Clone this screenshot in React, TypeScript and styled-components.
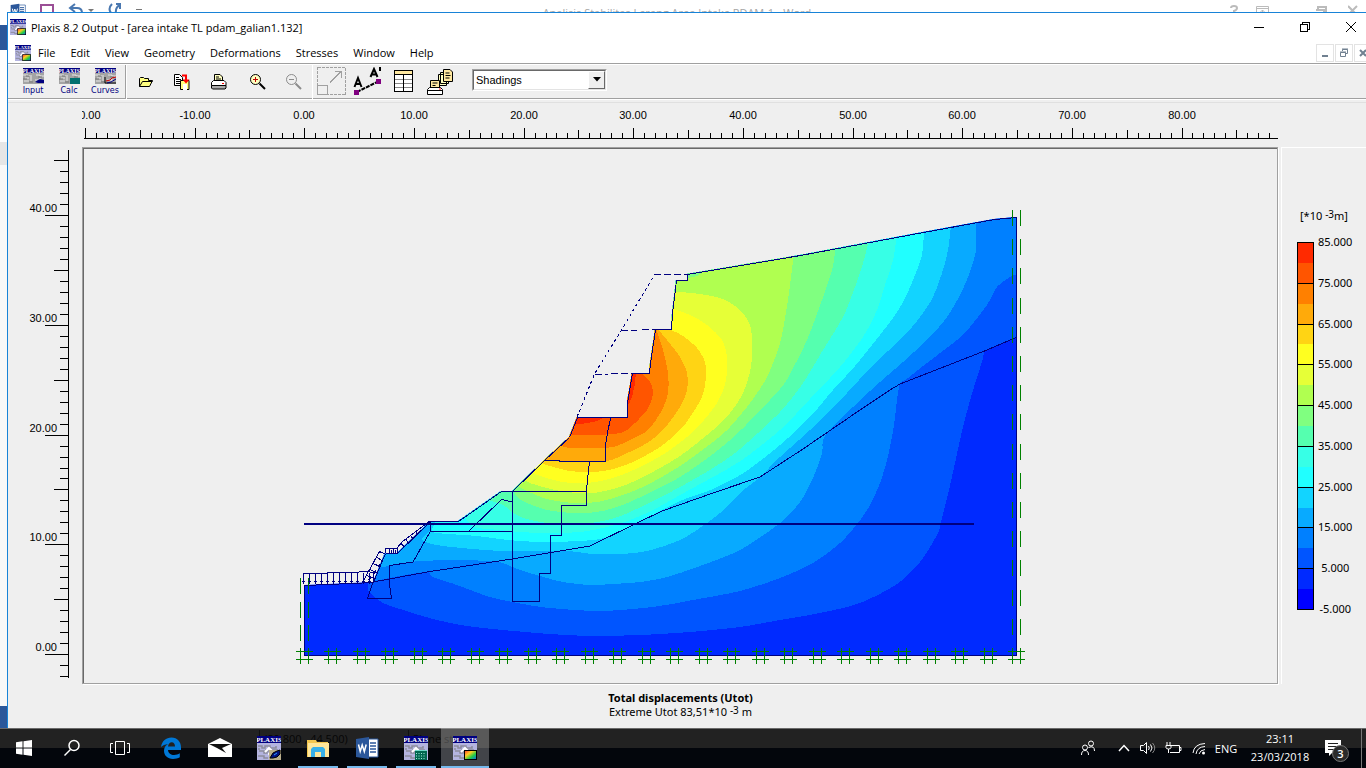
import React from "react";
import styled, { createGlobalStyle } from "styled-components";

const NAVY = "#000080";
const FACE = "#efefef";

const GlobalStyle = createGlobalStyle`
  * { box-sizing: border-box; }
  body { margin: 0; background: #fff; font-family: "Open Sans", "Noto Sans", sans-serif; font-size: 11px; color: #000; }
  button { font: inherit; color: inherit; background: none; border: 0; padding: 0; margin: 0; }
  svg { display: block; flex: none; }
`;

/* ---------- shell ---------- */
const Desktop = styled.div`
  display: flex;
  flex-direction: column;
  min-height: 100vh;
  overflow: hidden;
`;
const WordHeader = styled.header`
  position: relative;
  display: flex;
  gap: 14px;
  height: 12px;
  padding: 3px 8px 0 10px;
  overflow: hidden;
  background: #fff;
`;
const WordTitle = styled.div`
  flex: 1;
  margin-top: -3px;
  text-align: center;
  line-height: 25px;
  color: #a6a6a6;
  padding-right: 18px;
`;
const WordControls = styled.div`
  display: flex;
  gap: 18px;
`;
const Middle = styled.div`
  flex: 1;
  display: flex;
`;
const WordEdge = styled.div`
  width: 7px;
  display: flex;
  flex-direction: column;
`;
const EdgePart = styled.div<{ $h?: number; $color: string }>`
  ${(p) => (p.$h ? `height: ${p.$h}px;` : "flex: 1;")}
  background: ${(p) => p.$color};
`;
const Window = styled.main`
  flex: 1;
  min-width: 0;
  display: flex;
  flex-direction: column;
  border-top: 1px solid #1883d7;
  border-left: 1px solid #1883d7;
  background: ${FACE};
`;
const TitleBar = styled.div`
  display: flex;
  align-items: center;
  height: 28px;
  padding-left: 2px;
  background: #fff;
  overflow: hidden;
`;
const WindowTitle = styled.h1`
  flex: 1;
  margin: 0 0 0 5px;
  font-size: 11px;
  font-weight: 400;
`;
const Controls = styled.div`
  display: flex;
  margin-right: -8px;
`;
const ControlButton = styled.button`
  width: 46px;
  height: 28px;
  display: grid;
  place-items: center;
`;
const MenuBar = styled.nav`
  display: flex;
  align-items: center;
  gap: 15px;
  height: 23px;
  padding: 2px 0 0 7px;
  background: #fff;
  overflow: hidden;
  border-bottom: 1px solid #a0a0a0;
`;
const MenuItem = styled.button`
  line-height: 20px;
`;
const MenuIcon = styled.div`
  margin-right: -8px;
`;
const MdiControls = styled.div`
  display: flex;
  gap: 1px;
  margin: 0 -6px 0 auto;
`;
const MdiButton = styled.button`
  width: 18px;
  height: 18px;
  border: 1px solid #e3e3e3;
  display: grid;
  place-items: center;
`;

/* ---------- toolbar ---------- */
const Toolbar = styled.div`
  display: flex;
  height: 35px;
  align-items: center;
  border-top: 1px solid #fff;
  border-bottom: 1px solid #a0a0a0;
  box-shadow: 0 1px 0 #fff;
`;
const ProgramGroup = styled.div`
  display: flex;
  height: 34px;
  padding-left: 7px;
  width: 118px;
  border-right: 1px solid #a0a0a0;
`;
const ProgramButton = styled.button`
  width: 36px;
  display: flex;
  flex-direction: column;
  align-items: center;
  justify-content: center;
  gap: 2px;
  font: 8px/10px "DejaVu Sans", sans-serif;
  color: ${NAVY};
`;
const ToolGroup = styled.div`
  display: flex;
  align-items: center;
  height: 34px;
  padding-left: 1px;
  border-left: 1px solid #fff;
`;
const ToolButton = styled.button<{ $gap?: boolean }>`
  width: 36px;
  height: 32px;
  margin-left: ${(p) => (p.$gap ? 4 : 0)}px;
  display: grid;
  place-items: center;
`;
const ComboWrap = styled.label`
  position: relative;
  display: block;
  width: 135px;
  height: 22px;
  margin: 0 0 4px 14px;
  border: 1px solid;
  border-color: #a0a0a0 #fff #fff #a0a0a0;
`;
const Combo = styled.select`
  appearance: none;
  width: 100%;
  height: 20px;
  padding: 0 20px 0 2px;
  border: 1px solid;
  border-color: #696969 #e3e3e3 #e3e3e3 #696969;
  border-radius: 0;
  background: #fff;
  color: #000;
  font: 11px "Liberation Sans", sans-serif;
`;
const ComboArrow = styled.span`
  position: absolute;
  right: 1px;
  top: 1px;
  width: 17px;
  height: 18px;
  display: grid;
  place-items: center;
  pointer-events: none;
  background: ${FACE};
  border: 1px solid;
  border-color: #fff #696969 #696969 #fff;
`;

/* ---------- document ---------- */
const Workspace = styled.section`
  flex: 1;
  display: grid;
  grid-template-columns: 74px minmax(0, 1fr) 87px;
  grid-template-rows: 44px minmax(537px, 1fr) 44px;
  margin-top: 3px;
  border-top: 1px solid #e0e0e0;
`;
const TopRuler = styled.div`
  grid-column: 2 / 4;
  grid-row: 1;
`;
const SideRuler = styled.div`
  grid-column: 1;
  grid-row: 2;
`;
const Canvas = styled.div`
  grid-column: 2;
  grid-row: 2;
  margin-right: 1px;
  overflow: hidden;
  border: 1px solid #a0a0a0;
  box-shadow: inset 1px 1px 0 #696969, 1px 1px 0 #fff;
`;
const Legend = styled.aside`
  grid-column: 3;
  grid-row: 2;
  margin-left: 2px;
  padding: 60px 0 0 15px;
  border-left: 1px solid #fff;
  border-top: 1px solid #fff;
  font: 11px/16px "Noto Sans", sans-serif;
`;
const LegendUnit = styled.div`
  padding-left: 3px;
  margin-bottom: 10px;
  height: 16px;
  white-space: nowrap;
`;
const Sup = styled.sup`
  font-size: 10px;
  line-height: 0;
  vertical-align: 2px;
`;
const LegendBody = styled.div`
  display: flex;
  gap: 4px;
`;
const LegendBar = styled.div`
  width: 17px;
  height: 368px;
  margin-top: 8px;
  display: flex;
  flex-direction: column;
  border: 1px solid #000;
`;
const Swatch = styled.div<{ $color: string; $line: boolean }>`
  flex: 1;
  background: ${(p) => p.$color};
  border-top: ${(p) => (p.$line ? "1px solid #000" : "0")};
`;
const LegendLabels = styled.div`
  display: flex;
  flex-direction: column;
  justify-content: space-between;
  height: 383px;
  text-align: center;
`;
const Caption = styled.footer`
  grid-column: 2;
  grid-row: 3;
  padding-top: 7px;
  text-align: center;
  font: 11px/14px "Noto Sans", sans-serif;
`;

/* ---------- taskbar ---------- */
const Taskbar = styled.footer`
  position: relative;
  display: flex;
  height: 40px;
  background: linear-gradient(#6a6a6a 0 1px, #222 1px 20px, #03060c 20px);
  color: #fff;
`;
const GhostStatus = styled.div`
  position: absolute;
  left: 259px;
  top: 2px;
  display: flex;
  gap: 60px;
  height: 18px;
  line-height: 18px;
  color: #060606;
  white-space: nowrap;
`;
const GhostCell = styled.span`
  padding-left: 4px;
  border-left: 1px solid #111;
`;
const TaskButtons = styled.div`
  position: relative;
  display: flex;
  gap: 1px;
`;
const SystemButtons = styled.div`
  display: flex;
  margin-right: 2px;
`;
const TaskButton = styled.button<{ $active?: boolean; $open?: boolean }>`
  position: relative;
  width: 48px;
  height: 40px;
  display: grid;
  place-items: center;
  background: ${(p) => (p.$active ? "#ffffff40" : "transparent")};
  &::after {
    content: "";
    display: ${(p) => (p.$open ? "block" : "none")};
    position: absolute;
    bottom: 0;
    left: ${(p) => (p.$active ? 0 : 4)}px;
    right: ${(p) => (p.$active ? 0 : 4)}px;
    height: 2px;
    background: #76b9ed;
  }
`;
const Tray = styled.div`
  position: relative;
  display: flex;
  align-items: center;
  margin-left: auto;
  padding-right: 4px;
`;
const TrayIcon = styled.button<{ $w?: number }>`
  width: ${(p) => p.$w ?? 26}px;
  height: 40px;
  display: grid;
  place-items: center;
`;
const Clock = styled.time`
  width: 72px;
  text-align: center;
  line-height: 18px;
`;
const NoticeButton = styled.button`
  position: relative;
  width: 46px;
  height: 40px;
  padding-left: 9px;
  display: flex;
  align-items: center;
  border-right: 1px solid #777;
`;
const NoticeBadge = styled.span`
  position: absolute;
  left: 16px;
  top: 17px;
  width: 17px;
  height: 17px;
  border-radius: 50%;
  border: 1px solid #777;
  background: #2b2b2b;
  font-weight: 600;
  line-height: 15px;
  text-align: center;
`;

/* ---------- finite element plot ---------- */
type Pt = [number, number];

const DOMAIN =
  "304,655 304,585 373,582 384,555 386,553 397,553 430,521 458,521 501,491 512,491 544,460 569,437 577,417 627,417 627,402 632,373 649,373 650,363 655,329 671,329 672,313 676,280 687,280 687,274 800,255 923,232 994,219 1016,217 1016,655";

const BANDS: { color: string; pts: Pt[] }[] = [
  { color: "#0055ff", pts: [[1030, 331], [1017, 337], [987, 350], [982, 362], [971, 397], [963, 427], [955, 463], [949, 490], [941, 522], [937, 535], [920, 562], [897, 584], [860, 603], [820, 613], [780, 620], [740, 627], [690, 632], [640, 635], [590, 636], [550, 634], [503, 630], [467, 626], [433, 619], [400, 609], [383, 603], [370, 593], [368, 588], [369, 580]] },
  { color: "#0080ff", pts: [[1030, 274], [1016, 275], [1010, 277], [997, 287], [987, 305], [970, 327], [957, 340], [927, 363], [908, 378], [900, 384], [897, 400], [895, 417], [892, 437], [887, 460], [880, 483], [870, 505], [858, 523], [840, 543], [813, 563], [780, 578], [740, 591], [693, 600], [653, 607], [600, 611], [550, 608], [523, 604], [490, 597], [457, 585], [433, 577], [427, 572], [400, 576], [374, 581]] },
  { color: "#08aaff", pts: [[976, 222], [976, 250], [970, 272], [960, 295], [947, 317], [930, 337], [903, 362], [880, 382], [853, 407], [825, 436], [822, 453], [813, 478], [800, 502], [780, 523], [740, 550], [700, 566], [667, 577], [640, 582], [613, 584], [590, 585], [563, 582], [540, 576], [520, 570], [500, 562], [490, 561], [457, 560], [420, 561], [413, 562], [389, 566], [376, 568]] },
  { color: "#12d4ff", pts: [[951, 226], [948, 250], [943, 270], [933, 297], [920, 317], [903, 337], [873, 365], [847, 393], [810, 430], [780, 457], [760, 477], [740, 493], [727, 507], [707, 523], [680, 540], [647, 551], [620, 554], [593, 554], [568, 551], [540, 551], [503, 551], [473, 549], [443, 546], [428, 543], [422, 539], [430, 530], [427, 519]] },
  { color: "#20ffff", pts: [[924, 230], [922, 255], [913, 280], [903, 302], [890, 322], [855, 366], [833, 390], [810, 417], [780, 445], [745, 472], [713, 489], [680, 501], [647, 518], [627, 529], [613, 535], [600, 539], [580, 541], [547, 542], [520, 541], [500, 539], [477, 536], [437, 533], [432, 530], [434, 525], [437, 518]] },
  { color: "#37ffe6", pts: [[897, 234], [893, 260], [885, 285], [877, 310], [863, 337], [840, 367], [810, 399], [780, 430], [742, 460], [713, 477], [680, 495], [653, 510], [630, 520], [607, 527], [580, 532], [547, 533], [520, 532], [500, 530], [474, 527], [464, 516]] },
  { color: "#55ffaf", pts: [[869, 240], [863, 263], [855, 287], [843, 317], [823, 350], [803, 383], [780, 412], [740, 449], [713, 468], [680, 487], [647, 504], [623, 515], [603, 521], [580, 524], [547, 523], [523, 518], [512, 512], [503, 505], [488, 500]] },
  { color: "#80ff80", pts: [[836, 246], [832, 270], [822, 300], [807, 340], [792, 370], [780, 389], [740, 431], [713, 454], [680, 477], [647, 494], [620, 506], [597, 512], [573, 513], [547, 510], [527, 503], [517, 497], [513, 490]] },
  { color: "#b0ff50", pts: [[794, 252], [788, 300], [780, 343], [767, 377], [750, 403], [730, 427], [713, 442], [680, 466], [647, 485], [620, 496], [597, 502], [573, 503], [547, 499], [527, 491], [518, 486]] },
  { color: "#e6ff37", pts: [[668, 291], [700, 294], [723, 299], [740, 310], [750, 325], [752, 343], [751, 367], [743, 393], [730, 413], [713, 430], [680, 456], [647, 475], [620, 487], [593, 493], [567, 492], [547, 488], [530, 483], [520, 478]] },
  { color: "#ffff20", pts: [[668, 307], [690, 315], [707, 325], [722, 340], [727, 357], [726, 380], [717, 403], [695, 430], [667, 452], [640, 467], [613, 478], [587, 483], [563, 482], [543, 477], [528, 471]] },
  { color: "#ffd414", pts: [[655, 325], [671, 330], [683, 336], [697, 348], [705, 362], [706, 377], [702, 397], [690, 417], [680, 430], [660, 447], [633, 462], [613, 469], [593, 472], [570, 471], [550, 466], [536, 461]] },
  { color: "#ffaa0a", pts: [[655, 326], [667, 340], [680, 357], [687, 373], [687, 390], [680, 407], [663, 430], [647, 443], [623, 455], [607, 461], [580, 462], [560, 461], [542, 459]] },
  { color: "#ff8000", pts: [[655, 326], [663, 350], [668, 373], [668, 393], [662, 410], [648, 430], [630, 440], [613, 447], [593, 448], [570, 448], [556, 444]] },
  { color: "#ff5500", pts: [[632, 371], [642, 374], [650, 382], [653, 393], [647, 410], [627, 430], [613, 434], [590, 435], [565, 435]] },
];

const smooth = (pts: Pt[]) => {
  let d = `M${pts[0][0]} ${pts[0][1]}`;
  for (let i = 0; i < pts.length - 1; i++) {
    const a = pts[Math.max(0, i - 1)];
    const b = pts[i];
    const c = pts[i + 1];
    const e = pts[Math.min(pts.length - 1, i + 2)];
    const k = 7;
    d += `C${b[0] + (c[0] - a[0]) / k} ${b[1] + (c[1] - a[1]) / k} ${c[0] - (e[0] - b[0]) / k} ${c[1] - (e[1] - b[1]) / k} ${c[0]} ${c[1]}`;
  }
  return d;
};
const bandPath = (pts: Pt[]) =>
  `${smooth(pts)}L290 ${pts[pts.length - 1][1]}L290 190L${pts[0][0]} 190Z`;

const range = (n: number) => Array.from({ length: n }, (_, i) => i);

const Fixities = () => (
  <g stroke="#008000" fill="none">
    {[1012.5, 1020.5].map((x) => (
      <path key={x} d={range(15).map((i) => `M${x} ${Math.round(210 + i * 29.2)}v16`).join("")} />
    ))}
    {[300.5, 308.5].map((x) => (
      <path key={x} d={[578, 602, 625].map((y) => `M${x} ${y}v16`).join("")} />
    ))}
    {range(26).map((i) => {
      const x = Math.round(296 + i * 28.48);
      return <path key={i} d={`M${x} 651.5h17M${x} 659.5h17M${x + 4}.5 648v16M${x + 12}.5 648v16`} />;
    })}
  </g>
);

const Loads = () => (
  <g stroke={NAVY} fill="none">
    <path d="M303.5 584V573.5H327L328 572.5H352L367 571.5L373.500 572.5V582" />
    {range(12).map((i) => (
      <path key={i} d={`M${303 + i * 6}.5 573v11M${302 + i * 6} 581.5h3`} />
    ))}
    <path d="M363.500 580.500L379.500 551.500L385 554M366 575l9 4M369 569l8 4M372 563l9 4M376 557l7 4M372 577l-4 3M376 570l-2 4M380 564l-2 3" />
    <path d="M385.500 553V548.500H397V553M389.500 548v5M393.500 548v5M391.500 550v3M395.500 550v3" />
    <path d="M397 548L402 542L430 521M401 543l3 4M406 539l2 4M411 536l2 3M416 532l1 3" />
  </g>
);

const SlopeModel = () => (
  <svg width="100%" height="535" role="img" aria-label="Total displacements" shapeRendering="crispEdges">
    <defs>
      <clipPath id="soil">
        <polygon points={DOMAIN} />
      </clipPath>
    </defs>
    <g transform="translate(-83 -148)">
      <g clipPath="url(#soil)">
        <rect x="290" y="190" width="740" height="470" fill="#002aff" />
        {BANDS.map((b) => (
          <path key={b.color} d={bandPath(b.pts)} fill={b.color} />
        ))}
        <path d="M686 273H702L697 276L687 278Z" fill="#80ff80" />
        <path d="M626 370H636L635 384L632 397L629 404L626 406Z" fill="#ff2a00" />
        <path d="M570 416H608L603 418L597 421L588 423L572 425Z" fill="#ff2a00" />
      </g>
      <polygon points={DOMAIN} transform="translate(.5 .5)" fill="none" stroke={NAVY} />
      <g stroke={NAVY} fill="none">
        <path d="M373 582L427 572L512 559L590 546L637 523L662 511L713 493L760 477L780 464L803 449L860 410L890 390L900 384L987 350L1017 337" />
        <path d="M430.500 521V531.500H512" />
        <path d="M430 532L413 562L389.500 565.500V585L391.500 598.500H367.500L373 582" />
        <path d="M469 531L501.500 499.500L512 502" />
        <path d="M512.500 491V601.500H539.500V573.500H550.500V535.500H561.500V505.500H586.500V490L589.500 461" />
        <path d="M512 491.500H586" />
        <path d="M544 460.500H559V461.500H605.500V445L608 430L611 417" />
        <path d="M577 417L594.500 374L621.500 330L654.500 274.500" strokeDasharray="3 3" />
        <path d="M654 274.500H687M621 330.500H637M642 329.500H655M595 374.500H608M611 373.500H632" strokeDasharray="7 3" />
        <path d="M304 524H974" strokeWidth="2" />
      </g>
      <Fixities />
      <Loads />
    </g>
  </svg>
);

/* ---------- rulers ---------- */
const RULER_FONT = { fontFamily: '"Liberation Sans", sans-serif', fontSize: 11 };

const HorizontalRuler = () => (
  <svg width="100%" height="44" aria-label="Horizontal ruler">
    <path
      shapeRendering="crispEdges"
      stroke="#000"
      d={"M2 35.500H1196" + range(109).map((i) => {
        const h = i % 10 === 0 ? 10 : i % 5 === 0 ? 8 : 5;
        return `M${Math.round(3 + i * 10.965)}.5 ${35 - h}v${h}`;
      }).join("")}
    />
    {range(11).map((i) => (
      <text key={i} x={Math.round(3 + i * 109.65)} y="16" textAnchor="middle" {...RULER_FONT}>
        {((i - 2) * 10).toFixed(2)}
      </text>
    ))}
  </svg>
);

const VerticalRuler = () => (
  <svg width="74" height="537" aria-label="Vertical ruler">
    <path
      shapeRendering="crispEdges"
      stroke="#000"
      d={"M60.500 3V531" + range(48).map((i) => {
        const v = i - 2;
        const w = v % 10 === 0 ? 23 : v % 5 === 0 ? 14 : 8;
        return `M${60 - w} ${Math.round(507 - v * 10.97)}.5h${w}`;
      }).join("")}
    />
    {range(5).map((i) => (
      <text key={i} x="49" y={Math.round(504 - i * 109.7)} textAnchor="end" {...RULER_FONT}>
        {(i * 10).toFixed(2)}
      </text>
    ))}
  </svg>
);

/* ---------- icons ---------- */
const PlaxisIcon = ({ kind, size = 24 }: { kind: "input" | "calc" | "curves" | "output"; size?: number }) => (
  <svg width={size} height={size} viewBox="0 0 24 24" aria-hidden="true">
    <rect width="24" height="24" fill="#b4b4e0" />
    <path d="M1 10h4v2h3v-2h5v2h6v-2M2 15h5v2h4M1 20h6v2h4M15 14h6M2 12v2M9 13v2h5" stroke="#8c8c9c" strokeWidth="1.500" fill="none" />
    <path d="M8 16l4-4 3 3-3 3 2 3" stroke="#fff" strokeWidth="2" fill="none" />
    <rect width="24" height="7" fill="#000080" />
    <text x="12" y="6" textAnchor="middle" fontSize="7" fontWeight="700" fontFamily='"Liberation Serif", serif' fill="#fff">
      PLAXIS
    </text>
    {kind === "output" && (
      <>
        <defs>
          <linearGradient id="heat" x1="0" y1="0" x2="1" y2="1">
            <stop offset="0" stopColor="#f33" />
            <stop offset=".35" stopColor="#fc2" />
            <stop offset=".65" stopColor="#2c4" />
            <stop offset="1" stopColor="#06f" />
          </linearGradient>
        </defs>
        <rect x="11.500" y="14.500" width="12" height="9" fill="url(#heat)" stroke="#000" />
      </>
    )}
    {kind === "input" && (
      <>
        <rect x="12" y="14" width="12" height="10" fill="#b9ad8c" />
        <path d="M13 22l3-5 4-2 3-1v4l-3 3-4 1z" fill="#001080" stroke="#000" />
        <path d="M17 19l3-2" stroke="#39f" />
      </>
    )}
    {kind === "calc" && (
      <>
        <rect x="11" y="14" width="12" height="10" fill="#006850" />
        <path d="M11 14.500h12" stroke="#6fd8c8" />
        <path d="M12 17.500h10M12 20h10M12 22.500h10" stroke="#9fe8d8" strokeDasharray="1 1.500" />
      </>
    )}
  </svg>
);

const ProgramIcon = ({ kind }: { kind: string }) => (
  <svg width="21" height="16" viewBox="0 0 21 16" aria-hidden="true">
    <rect width="21" height="16" fill="#a4a4a4" />
    <path d="M0 7h5v1h4M2 10h4M13 7h4v1h4M1 13h5M12 12h5M8 9v4M17 10v4" stroke="#e6e6e6" fill="none" />
    <path d="M3 8h3v1M0 11h4M6 14h4M15 9h4" stroke="#777" fill="none" />
    <rect width="21" height="5" fill="#000080" />
    <text x="10" y="5" textAnchor="middle" fontSize="6" fontWeight="700" fontFamily='"Liberation Serif", serif' fill="#fff">
      PLAXIS
    </text>
    {kind === "Input" && <path d="M12 14l3-2 2-1 4 1v3h-6z" fill="#000080" />}
    {kind === "Calc" && <path d="M11 10h10v6H11z" fill="#007070" />}
    {kind === "Curves" && (
      <>
        <path d="M10 9v6h11" stroke="#000" fill="none" />
        <path d="M11 13l4-1 2-2 4-1" stroke="#c00" fill="none" />
        <path d="M12 15l4-1 5-3" stroke="#000080" fill="none" />
      </>
    )}
  </svg>
);

const OpenIcon = () => (
  <svg width="16" height="12" viewBox="0 0 16 12">
    <path d="M1.500 10.500V2.500L2.500 1.500H5.500L6.500 2.500H10.500V4.500H14.500L11.500 10.500Z" fill="#ffff80" stroke="#000" />
    <path d="M1.500 10.500L4.500 5.500H14.500" fill="none" stroke="#000" />
  </svg>
);
const CopyIcon = () => (
  <svg width="18" height="18" viewBox="0 0 18 18">
    <path d="M1.500 1.500H6.500L9.500 4.500V12.500H1.500Z" fill="#fff" stroke="#000" />
    <path d="M3 4.500h3M3 6.500h5M3 8.500h5M3 10.500h5" stroke="#000" />
    <path d="M7.500 7.500h8.500v9H7.500z" fill="#ffff80" stroke="#000" />
    <path d="M10 11h4v6h-4z" fill="#fff" />
    <path d="M9 1.500h5v5h2.500L13 10.500 9.500 6.500H12V3.500H9z" fill="#f00" />
  </svg>
);
const PrinterIcon = () => (
  <svg width="17" height="17" viewBox="0 0 17 17">
    <path d="M4.500 8V1.500H10L12.500 4V8" fill="#ffffc0" stroke="#000" />
    <path d="M6 4h3M6 6h5" stroke="#000" />
    <path d="M1.500 9.500L3.500 7.500H14L16 9.500V12.500H1.500Z" fill="#fff" stroke="#000" />
    <path d="M1.500 12.500H16V15L15 16H2.500L1.500 15Z" fill="#aaa" stroke="#000" />
    <path d="M12 10.500h2" stroke="#f00" />
  </svg>
);
const LensIcon = ({ plus }: { plus?: boolean }) => {
  const ink = plus ? "#000" : "#8c8c8c";
  return (
    <svg width="18" height="18" viewBox="0 0 18 18" fill="none">
      <circle cx="6.500" cy="6.500" r="5" stroke={ink} fill={plus ? "#ffffc0" : "none"} />
      <path d="M10.500 10.500L16 16" stroke={ink} strokeWidth="2" />
      <path d={plus ? "M4 6.500h5M6.500 4v5" : "M4 6.500h5"} stroke={plus ? "#c00000" : ink} />
    </svg>
  );
};
const FitIcon = () => (
  <svg width="30" height="29" viewBox="0 0 30 29" fill="none" shapeRendering="crispEdges">
    <rect x=".5" y=".5" width="28" height="27" stroke="#a0a0a0" strokeDasharray="3 1" />
    <rect x=".5" y="18.500" width="10" height="9" fill={FACE} stroke="#a0a0a0" />
    <path d="M13 15.500L24 4.500M18 4.500h6v6" stroke="#a0a0a0" />
  </svg>
);
const SectionIcon = () => (
  <svg width="30" height="29" viewBox="0 0 30 29" fill="none">
    <path d="M1.500 20L5 11L8.500 20M3 17h4.500" stroke="#000" strokeWidth="2" />
    <path d="M17.500 10L21 2L24.500 10M19 7.500h4.500M27 0v4" stroke="#000" strokeWidth="2" />
    <path d="M4 25L26 14" stroke="#000" strokeWidth="2" strokeDasharray="4 1" />
    <path d="M1 23h5v5H1zM23 12h5v5h-5z" fill="#800080" />
  </svg>
);
const TableIcon = () => (
  <svg width="20" height="23" viewBox="0 0 20 23" shapeRendering="crispEdges">
    <rect x="1" y="1" width="18" height="21" fill="#fff" />
    <rect x="1" y="1" width="18" height="4" fill="#ffe8a0" />
    <path d="M1 9.500h18M1 13.500h18M1 17.500h18" stroke="#888" />
    <path d="M.5 .5h18v21H.500zM0 4.500h19M9.500 4v18" fill="none" stroke="#000" />
  </svg>
);
const ReportIcon = () => (
  <svg width="28" height="28" viewBox="0 0 28 28" stroke="#000">
    <path d="M12.500 6.500h8v11h-8zM14.500 4.500h8v11h-8z" fill="#ffffc0" />
    <path d="M17.500 1.500H24L26.500 4V13.500H17.500Z" fill="#ffe8a0" />
    <path d="M19.500 5h4M19.500 7.500h5M19.500 10h4" />
    <path d="M4.500 19V12.500H13.500V19" fill="#ffe8a0" />
    <path d="M6.500 15h5M6.500 17.500h3" />
    <path d="M1.500 21.500L3.500 19.500H14.500L16.500 21.500V26.500H1.500Z" fill="#fff" />
    <path d="M1.500 22.500H16" />
    <path d="M13 21h2" stroke="#f00" />
  </svg>
);

const MinimizeGlyph = () => <svg width="12" height="12" stroke="#000"><path d="M1 6.500h10" shapeRendering="crispEdges" /></svg>;
const RestoreGlyph = () => (
  <svg width="12" height="12" stroke="#000" fill="none" shapeRendering="crispEdges">
    <path d="M1.500 3.500h7v7h-7zM3.500 3V1.500h7v7H9" />
  </svg>
);
const CloseGlyph = () => <svg width="12" height="12" stroke="#000"><path d="M1 1l10 10M11 1L1 11" /></svg>;

const WindowsLogo = () => (
  <svg width="16" height="16" viewBox="0 0 16 16" fill="#fff">
    <path d="M0 2.200L6.500 1.300V7.500H0ZM7.500 1.200L16 0V7.500H7.500ZM0 8.500H6.500V14.700L0 13.800ZM7.500 8.500H16V16L7.500 14.800Z" />
  </svg>
);
const SearchGlyph = () => (
  <svg width="18" height="18" fill="none" stroke="#fff" strokeWidth="1.500">
    <circle cx="11" cy="6.500" r="5" />
    <path d="M7.500 10.500L1.500 16.500" />
  </svg>
);
const TaskViewGlyph = () => (
  <svg width="20" height="14" fill="none" stroke="#fff">
    <path d="M5.500 .5h9v13h-9zM3 2.500H.500v9H3M17 2.500h2.500v9H17" />
  </svg>
);
const EdgeLogo = () => (
  <svg width="22" height="22" viewBox="0 0 22 22" fill="#0078d7">
    <path d="M1 10C2 4 6 .5 11.500 .5C17.500 .5 21 5 21 10.500V13H8C8.300 16.300 11 18 14 18C16.300 18 18.200 17.300 19.800 16.300V20.300C18 21.300 15.500 22 13 22C7.500 22 4 18.500 4 13.800C4 10.800 5.500 8.300 8 7C5.200 7.300 2.500 8.500 1 10ZM8 9.500H15C15 7 13.800 5.300 11.700 5.300C9.800 5.300 8.300 7 8 9.500Z" />
  </svg>
);
const MailLogo = () => (
  <svg width="24" height="20" viewBox="0 0 24 20">
    <path d="M0 6L12 0L24 6V19H0Z" fill="#fff" />
    <path d="M1 6H23L14 10L18 15L9 10Z" fill="#111" />
  </svg>
);
const FolderLogo = () => (
  <svg width="22" height="19" viewBox="0 0 22 19">
    <path d="M0 1H9L10 3H21V18H0Z" fill="#f3c64f" />
    <path d="M1 4H22V18H1Z" fill="#ffe69a" />
    <path d="M4 18V10L6 8H16L18 10V18H14V13H8V18Z" fill="#38b0e8" />
  </svg>
);
const WordLogo = ({ width = 24 }: { width?: number }) => (
  <svg width={width} height={width} viewBox="0 0 24 24">
    <path d="M13 3H23V21H13Z" fill="#fff" stroke="#2b579a" />
    <path d="M15 7h6M15 10h6M15 13h6M15 16h6" stroke="#2b579a" strokeWidth="1.500" />
    <path d="M1 3L14 1V23L1 21Z" fill="#2b579a" />
    <path d="M3.500 8.500L5.200 15.500L7.200 9L9.300 15.500L11.200 8.500" fill="none" stroke="#fff" strokeWidth="1.500" />
  </svg>
);

const LEGEND_COLORS = ["#ff2a00", "#ff5500", "#ff8000", "#ffaa0a", "#ffd414", "#ffff20", "#e6ff37", "#b0ff50", "#80ff80", "#55ffaf", "#37ffe6", "#20ffff", "#12d4ff", "#08aaff", "#0080ff", "#0055ff", "#002aff", "#0000ff"];
const LEGEND_LABELS = ["85.000", "75.000", "65.000", "55.000", "45.000", "35.000", "25.000", "15.000", "5.000", "-5.000"];
const MENUS = ["File", "Edit", "View", "Geometry", "Deformations", "Stresses", "Window", "Help"];

export default function App() {
  return (
    <Desktop>
      <GlobalStyle />
      <WordHeader>
        <WordLogo width={16} />
        <svg width="14" height="14" fill="none" stroke="#9b4f96" strokeWidth="2"><path d="M1 2h12v11H1z" /></svg>
        <svg width="26" height="14" fill="none" stroke="#4a78b0" strokeWidth="2">
          <path d="M7 1L2 5L7 9M2 5H9Q14 5 14 10" /><path d="M20 6h6l-3 3z" fill="#777" stroke="none" />
        </svg>
        <svg width="34" height="14" fill="none" stroke="#4a78b0" strokeWidth="2">
          <path d="M4 1Q-1 6 4 11M8 1h4v5M12 2Q7 4 8 11" /><path d="M28 6.500h6" stroke="#777" strokeWidth="1" />
        </svg>
        <WordTitle>Analisis Stabilitas Lereng Area Intake PDAM-1 - Word</WordTitle>
        <WordControls>
          <svg width="8" height="12" fill="none" stroke="#bbb" strokeWidth="2"><path d="M1 5Q1 3 4 3Q7 3 7 5Q7 7 4 8V10" /></svg>
          <svg width="14" height="12" fill="none" stroke="#bbb"><path d="M.5 3.500h12v9h-12zM.5 5.500h12M6.500 7v5M4 9.500l2.500-2.500 2.500 2.500" /></svg>
          <svg width="42" height="12" fill="none" stroke="#bbb" strokeWidth="2"><path d="M28 7h8v5h-8M30 7V4h8v5" /></svg>
          <svg width="10" height="12" fill="none" stroke="#bbb" strokeWidth="2"><path d="M0 3l9 9M9 3l-9 9" /></svg>
        </WordControls>
      </WordHeader>

      <Middle>
        <WordEdge>
          <EdgePart $h={13} $color="#fff" />
          <EdgePart $h={25} $color="#2b579a" />
          <EdgePart $h={92} $color="#fdfdfd" />
          <EdgePart $h={23} $color="#e6e6e6" />
          <EdgePart $color="#f8f8f8" />
          <EdgePart $h={22} $color="#2b579a" />
        </WordEdge>

        <Window>
          <TitleBar>
            <PlaxisIcon kind="output" size={16} />
            <WindowTitle>Plaxis 8.2 Output - [area intake TL pdam_galian1.132]</WindowTitle>
            <Controls>
              <ControlButton aria-label="Minimize"><MinimizeGlyph /></ControlButton>
              <ControlButton aria-label="Restore"><RestoreGlyph /></ControlButton>
              <ControlButton aria-label="Close"><CloseGlyph /></ControlButton>
            </Controls>
          </TitleBar>

          <MenuBar>
            <MenuIcon><PlaxisIcon kind="output" size={16} /></MenuIcon>
            {MENUS.map((m) => <MenuItem key={m}>{m}</MenuItem>)}
            <MdiControls>
              <MdiButton aria-label="Minimize document">
                <svg width="10" height="10" stroke="#708090" strokeWidth="2"><path d="M2 8h6" /></svg>
              </MdiButton>
              <MdiButton aria-label="Restore document">
                <svg width="10" height="10" fill="none" stroke="#708090"><path d="M1.500 4.500h5v4h-5zM1 4h6M3.500 3V1.500h5v4H7M3 1h6" /></svg>
              </MdiButton>
              <MdiButton aria-label="Close document">
                <svg width="10" height="10" stroke="#708090" strokeWidth="2"><path d="M2 2l6 6M8 2L2 8" /></svg>
              </MdiButton>
            </MdiControls>
          </MenuBar>

          <Toolbar>
            <ProgramGroup>
              {["Input", "Calc", "Curves"].map((p) => (
                <ProgramButton key={p}><ProgramIcon kind={p} />{p}</ProgramButton>
              ))}
            </ProgramGroup>
            <ToolGroup>
              <ToolButton aria-label="Open"><OpenIcon /></ToolButton>
              <ToolButton aria-label="Copy to clipboard"><CopyIcon /></ToolButton>
              <ToolButton aria-label="Print"><PrinterIcon /></ToolButton>
              <ToolButton aria-label="Zoom in" $gap><LensIcon plus /></ToolButton>
              <ToolButton aria-label="Zoom out"><LensIcon /></ToolButton>
            </ToolGroup>
            <ToolGroup>
              <ToolButton aria-label="Scale"><FitIcon /></ToolButton>
              <ToolButton aria-label="Cross section"><SectionIcon /></ToolButton>
              <ToolButton aria-label="Table"><TableIcon /></ToolButton>
              <ToolButton aria-label="Report"><ReportIcon /></ToolButton>
            </ToolGroup>
            <ComboWrap>
              <Combo aria-label="Display type" defaultValue="Shadings">
                <option>Shadings</option>
              </Combo>
              <ComboArrow>
                <svg width="8" height="5"><path d="M0 0h8L4 4.500z" /></svg>
              </ComboArrow>
            </ComboWrap>
          </Toolbar>

          <Workspace>
            <TopRuler><HorizontalRuler /></TopRuler>
            <SideRuler><VerticalRuler /></SideRuler>
            <Canvas><SlopeModel /></Canvas>
            <Legend>
              <LegendUnit>[*10 <Sup>-3</Sup>m]</LegendUnit>
              <LegendBody>
                <LegendBar>
                  {LEGEND_COLORS.map((c, i) => <Swatch key={c} $color={c} $line={i > 0 && i % 2 === 0} />)}
                </LegendBar>
                <LegendLabels>
                  {LEGEND_LABELS.map((l) => <span key={l}>{l}</span>)}
                </LegendLabels>
              </LegendBody>
            </Legend>
            <Caption>
              <strong>Total displacements (Utot)</strong>
              <div>Extreme Utot 83,51*10 <Sup>-3</Sup> m</div>
            </Caption>
          </Workspace>
        </Window>
      </Middle>

      <Taskbar>
        <GhostStatus>
          <GhostCell>(89.800 , 44.500)</GhostCell>
          <GhostCell>Plane strain</GhostCell>
        </GhostStatus>
        <TaskButtons>
          <SystemButtons>
            <TaskButton aria-label="Start"><WindowsLogo /></TaskButton>
            <TaskButton aria-label="Search"><SearchGlyph /></TaskButton>
            <TaskButton aria-label="Task view"><TaskViewGlyph /></TaskButton>
          </SystemButtons>
          <TaskButton aria-label="Edge"><EdgeLogo /></TaskButton>
          <TaskButton aria-label="Mail"><MailLogo /></TaskButton>
          <TaskButton aria-label="Plaxis input"><PlaxisIcon kind="input" /></TaskButton>
          <TaskButton aria-label="File Explorer" $open><FolderLogo /></TaskButton>
          <TaskButton aria-label="Word" $open><WordLogo /></TaskButton>
          <TaskButton aria-label="Plaxis calculations" $open><PlaxisIcon kind="calc" /></TaskButton>
          <TaskButton aria-label="Plaxis output" $open $active><PlaxisIcon kind="output" /></TaskButton>
        </TaskButtons>
        <Tray>
          <TrayIcon $w={40} aria-label="People">
            <svg width="16" height="16" fill="none" stroke="#fff">
              <circle cx="5" cy="7.500" r="2.500" /><path d="M1.500 15Q1.500 10.500 5 10.500Q8.500 10.500 8.500 15" />
              <circle cx="11" cy="3.500" r="2.500" /><path d="M8.500 7.500Q14.500 5 14.500 11" />
            </svg>
          </TrayIcon>
          <TrayIcon $w={32} aria-label="Hidden icons">
            <svg width="12" height="8" fill="none" stroke="#fff" strokeWidth="1.500"><path d="M1 7l5-5.500L11 7" /></svg>
          </TrayIcon>
          <TrayIcon $w={16} aria-label="Volume">
            <svg width="16" height="14" fill="none" stroke="#fff">
              <path d="M.5 4.500h3L6.500 1.500v11l-3-3h-3zM8.500 5q1.500 2 0 4M10.500 3.500q3 3.500 0 7" /><path d="M12.500 2q4.500 5 0 10" stroke="#888" />
            </svg>
          </TrayIcon>
          <TrayIcon $w={34} aria-label="Battery">
            <svg width="17" height="14" fill="none" stroke="#fff">
              <path d="M6 4.500h8.500v7H5M14.500 6.500h1.500v3h-1.500M2 1v3M5 1v3M1 4.500h5v2q0 1.500-2.500 1.500T1 6.500zM3.500 8v4" />
            </svg>
          </TrayIcon>
          <TrayIcon $w={18} aria-label="Wi-Fi">
            <svg width="14" height="14" fill="none" stroke="#fff">
              <path d="M1 12Q2 3 13 2.500M4 13Q5 6 13 5.500M7 13Q8 9 13 8.500" /><circle cx="11.500" cy="12" r="1.500" fill="#fff" stroke="none" />
            </svg>
          </TrayIcon>
          <TrayIcon $w={36} aria-label="Language">ENG</TrayIcon>
          <Clock>23:11<br />23/03/2018</Clock>
          <NoticeButton aria-label="Notifications">
            <svg width="16" height="16"><path d="M0 0h16v13H7l-3 3v-3H0z" fill="#fff" /><path d="M3 3.500h10M3 6.500h10M3 9.500h7" stroke="#222" /></svg>
            <NoticeBadge>3</NoticeBadge>
          </NoticeButton>
        </Tray>
      </Taskbar>
    </Desktop>
  );
}
